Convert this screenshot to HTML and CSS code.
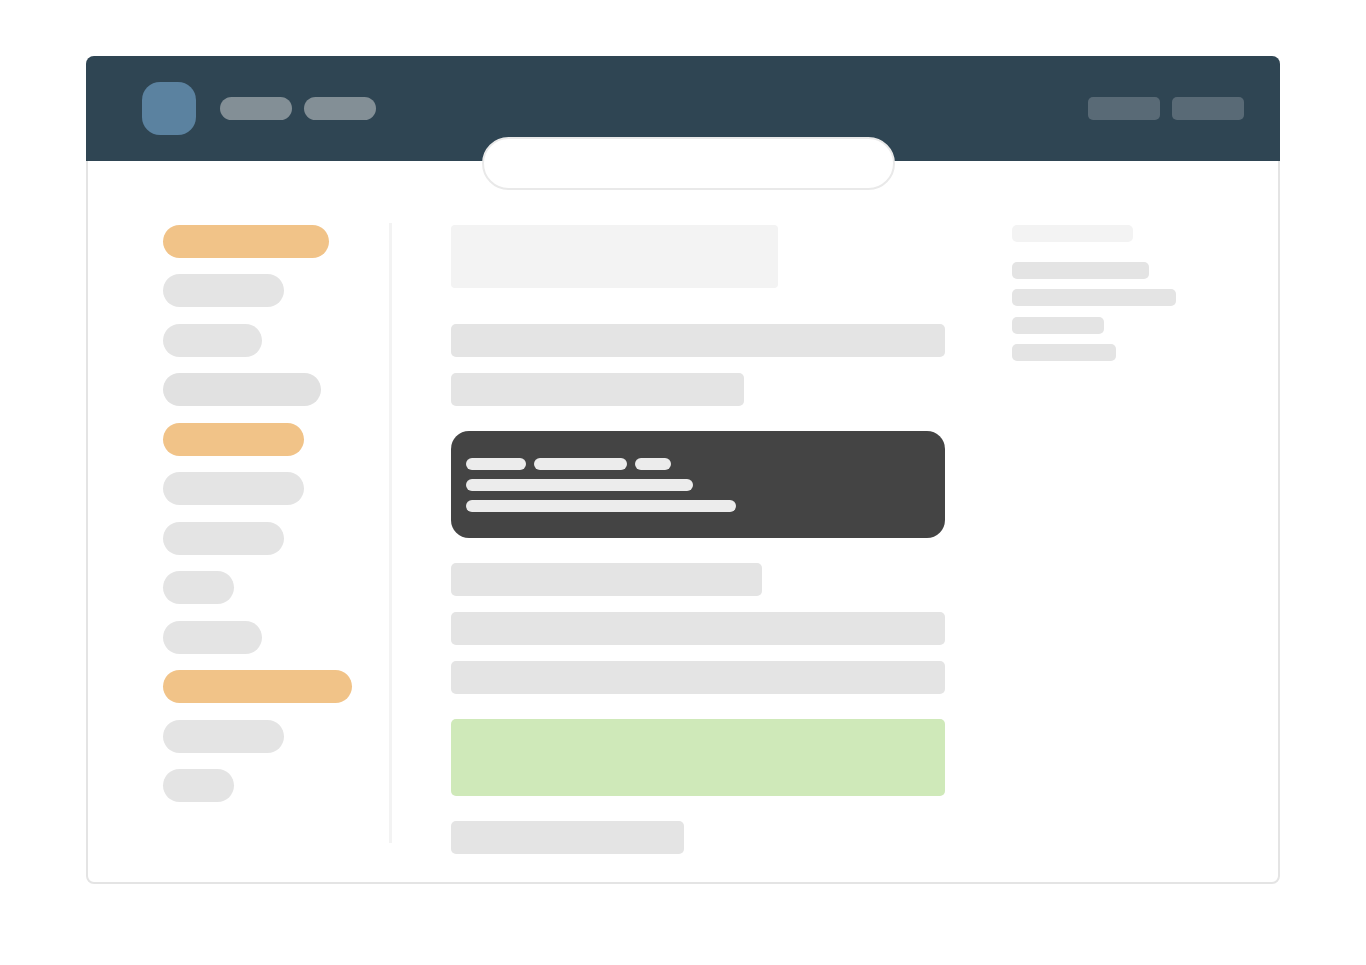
FILE: index.html
```html
<!DOCTYPE html>
<html lang="en">
<head>
<meta charset="utf-8">
<meta name="viewport" content="width=device-width, initial-scale=1">
<title>Documentation layout</title>
<link rel="stylesheet" href="styles.css">
</head>
<body>
<div class="window">
  <header class="topbar">
    <a class="logo" href="#" aria-label="Home"></a>
    <nav class="group" aria-label="Primary">
      <a class="tab" href="#" aria-label="First tab"></a>
      <a class="tab" href="#" aria-label="Second tab"></a>
    </nav>
    <div class="group actions">
      <button class="action" type="button" aria-label="First action"></button>
      <button class="action" type="button" aria-label="Second action"></button>
    </div>
    <input class="search" type="search" aria-label="Search">
  </header>
  <div class="columns">
    <nav class="sidebar" aria-label="Sections">
      <div class="links">
        <a class="pill accent w166" href="#" aria-label="Section 1"></a>
        <a class="pill w121" href="#" aria-label="Page 1"></a>
        <a class="pill w99" href="#" aria-label="Page 2"></a>
        <a class="pill current w158" href="#" aria-label="Page 3"></a>
        <a class="pill accent w141" href="#" aria-label="Section 2"></a>
        <a class="pill w141" href="#" aria-label="Page 4"></a>
        <a class="pill w121" href="#" aria-label="Page 5"></a>
        <a class="pill w71" href="#" aria-label="Page 6"></a>
        <a class="pill w99" href="#" aria-label="Page 7"></a>
        <a class="pill accent w189" href="#" aria-label="Section 3"></a>
        <a class="pill w121" href="#" aria-label="Page 8"></a>
        <a class="pill w71" href="#" aria-label="Page 9"></a>
      </div>
    </nav>
    <main class="article">
      <div class="title"></div>
      <div class="text-group">
        <div class="bar"></div>
        <div class="bar w293"></div>
      </div>
      <div class="code">
        <div class="code-line">
          <span class="token w60"></span>
          <span class="token w93"></span>
          <span class="token w36"></span>
        </div>
        <div class="code-line"><span class="token w227"></span></div>
        <div class="code-line"><span class="token w270"></span></div>
      </div>
      <div class="text-group">
        <div class="bar w311"></div>
        <div class="bar"></div>
        <div class="bar"></div>
      </div>
      <div class="note"></div>
      <div class="bar w233"></div>
    </main>
    <aside class="toc">
      <div class="toc-title w121"></div>
      <nav class="toc-links" aria-label="On this page">
        <a class="toc-link w137" href="#" aria-label="Heading 1"></a>
        <a class="toc-link w164" href="#" aria-label="Heading 2"></a>
        <a class="toc-link w92" href="#" aria-label="Heading 3"></a>
        <a class="toc-link w104" href="#" aria-label="Heading 4"></a>
      </nav>
    </aside>
  </div>
</div>
</body>
</html>
```
FILE: styles.css
```css
* { box-sizing: border-box; }

body {
  margin: 0;
  padding: 56px 86px;
  background: #fff;
  font-family: "Liberation Sans", Arial, sans-serif;
}

.window {
  border: 2px solid #e4e4e4;
  border-radius: 8px;
  background: #fff;
}

.topbar {
  position: relative;
  display: flex;
  align-items: center;
  gap: 24px;
  height: 105px;
  margin: -2px -2px 0;
  padding: 0 36px 0 56px;
  border-radius: 8px 8px 0 0;
  background: #2f4553;
}

.logo {
  width: 54px;
  height: 53px;
  border-radius: 18px;
  background: #5b82a0;
}

.group { display: flex; gap: 12px; }
.actions { margin-left: auto; }

.tab, .action { width: 72px; height: 23px; }
.tab { border-radius: 12px; background: #838f96; }
.action {
  padding: 0;
  border: 0;
  border-radius: 5px;
  background: #596a76;
}

/* The search field straddles the lower edge of the top bar. */
.search {
  position: absolute;
  left: 396px;
  bottom: -29px;
  width: calc(100% - 781px);
  height: 53px;
  margin: 0;
  padding: 0 24px;
  border: 2px solid #e9e9e9;
  border-radius: 27px;
  background: #fff;
  font: inherit;
}

.columns {
  display: flex;
  padding: 62px 0 28px 75px;
}

.sidebar {
  flex: none;
  width: 229px;
  height: 620px;
  padding: 2px 0 41px;
  border-right: 3px solid #f3f3f3;
}

.links {
  display: flex;
  flex-direction: column;
  justify-content: space-between;
  height: 100%;
}

.pill {
  height: 33px;
  border-radius: 17px;
  background: #e4e4e4;
}
.pill.current { background: #e1e1e1; }
.pill.accent { background: #f1c388; }

.article {
  flex: 1;
  display: flex;
  flex-direction: column;
  gap: 25px;
  margin: 2px 67px 0 59px;
}

.title {
  width: 327px;
  height: 63px;
  margin-bottom: 11px;
  border-radius: 4px;
  background: #f3f3f3;
}

.text-group {
  display: flex;
  flex-direction: column;
  gap: 16px;
}

.bar {
  height: 33px;
  border-radius: 5px;
  background: #e4e4e4;
}

.code {
  display: flex;
  flex-direction: column;
  gap: 9px;
  height: 107px;
  padding: 27px 15px;
  border-radius: 18px;
  background: #444;
}
.code-line { display: flex; gap: 8px; }
.token {
  height: 12px;
  border-radius: 6px;
  background: #ececec;
}

.note {
  height: 77px;
  border-radius: 5px;
  background: #cfe9b9;
}

.toc { flex: none; width: 266px; padding-top: 2px; }
.toc-title {
  height: 17px;
  margin-bottom: 20px;
  border-radius: 5px;
  background: #f3f3f3;
}
.toc-links {
  display: flex;
  flex-direction: column;
  justify-content: space-between;
  height: 99px;
}
.toc-link {
  height: 17px;
  border-radius: 5px;
  background: #e4e4e4;
}

.w36 { width: 36px; }
.w60 { width: 60px; }
.w71 { width: 71px; }
.w92 { width: 92px; }
.w93 { width: 93px; }
.w99 { width: 99px; }
.w104 { width: 104px; }
.w121 { width: 121px; }
.w137 { width: 137px; }
.w141 { width: 141px; }
.w158 { width: 158px; }
.w164 { width: 164px; }
.w166 { width: 166px; }
.w189 { width: 189px; }
.w227 { width: 227px; }
.w233 { width: 233px; }
.w270 { width: 270px; }
.w293 { width: 293px; }
.w311 { width: 311px; }
```
